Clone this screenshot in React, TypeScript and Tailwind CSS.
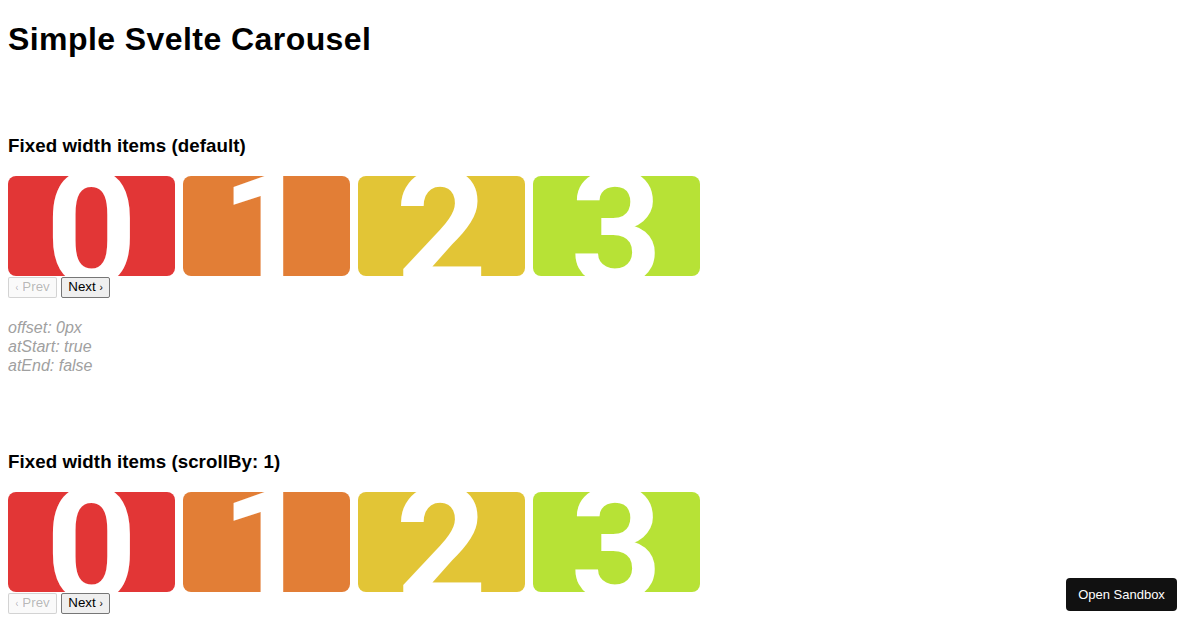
const colors = ["bg-[rgb(226,54,54)]", "bg-[rgb(226,126,54)]", "bg-[rgb(226,197,54)]", "bg-[rgb(183,226,54)]"];

function Carousel() {
  return (
    <div>
      <div className="flex gap-[8px] overflow-hidden">
        {[0, 1, 2, 3].map((n) => (
          <div
            key={n}
            className={`${colors[n]} w-[167px] h-[100px] shrink-0 rounded-[8px] overflow-hidden flex items-center justify-center text-white font-bold text-[160px] leading-[100px] pt-[8px] font-[Roboto]`}
          >
            {n}
          </div>
        ))}
      </div>
      <div className="flex gap-[4px] mt-px">
        <button
          disabled
          className="w-[49px] h-[21px] text-[13.33px] leading-[15px] pb-px rounded-[2px] border border-[rgba(118,118,118,0.3)] bg-[rgba(239,239,239,0.3)] text-[rgba(16,16,16,0.3)]"
        >
          <span className="text-[10px]">‹</span> Prev
        </button>
        <button className="w-[49px] h-[21px] text-[13.33px] leading-[15px] pb-px rounded-[2px] border border-[#767676] bg-[#efefef] text-black">
          Next <span className="text-[10px]">›</span>
        </button>
      </div>
    </div>
  );
}

export default function App() {
  return (
    <div className="px-[8px] bg-white min-h-[630px] text-black" style={{ fontFamily: '"Liberation Sans", Arial, sans-serif' }}>
      <h1 className="pt-[21px] text-[32px] leading-[37px] font-bold tracking-[0.43px]">Simple Svelte Carousel</h1>
      <h3 className="mt-[76.5px] text-[18.72px] leading-[21.5px] font-bold tracking-[0.07px]">Fixed width items (default)</h3>
      <div className="mt-[20px]">
        <Carousel />
      </div>
      <div className="mt-[19.5px] italic text-[16px] leading-[19px] text-[#a0a0a0]">
        <div>offset: 0px</div>
        <div>atStart: true</div>
        <div>atEnd: false</div>
      </div>
      <h3 className="mt-[76.5px] text-[18.72px] leading-[21.5px] font-bold tracking-[0.07px]">Fixed width items (scrollBy: 1)</h3>
      <div className="mt-[19.5px]">
        <Carousel />
      </div>
      <button className="fixed right-[23px] bottom-[19px] w-[111px] h-[33px] rounded-[4px] bg-[#111111] text-white text-[13px]">
        Open Sandbox
      </button>
    </div>
  );
}
